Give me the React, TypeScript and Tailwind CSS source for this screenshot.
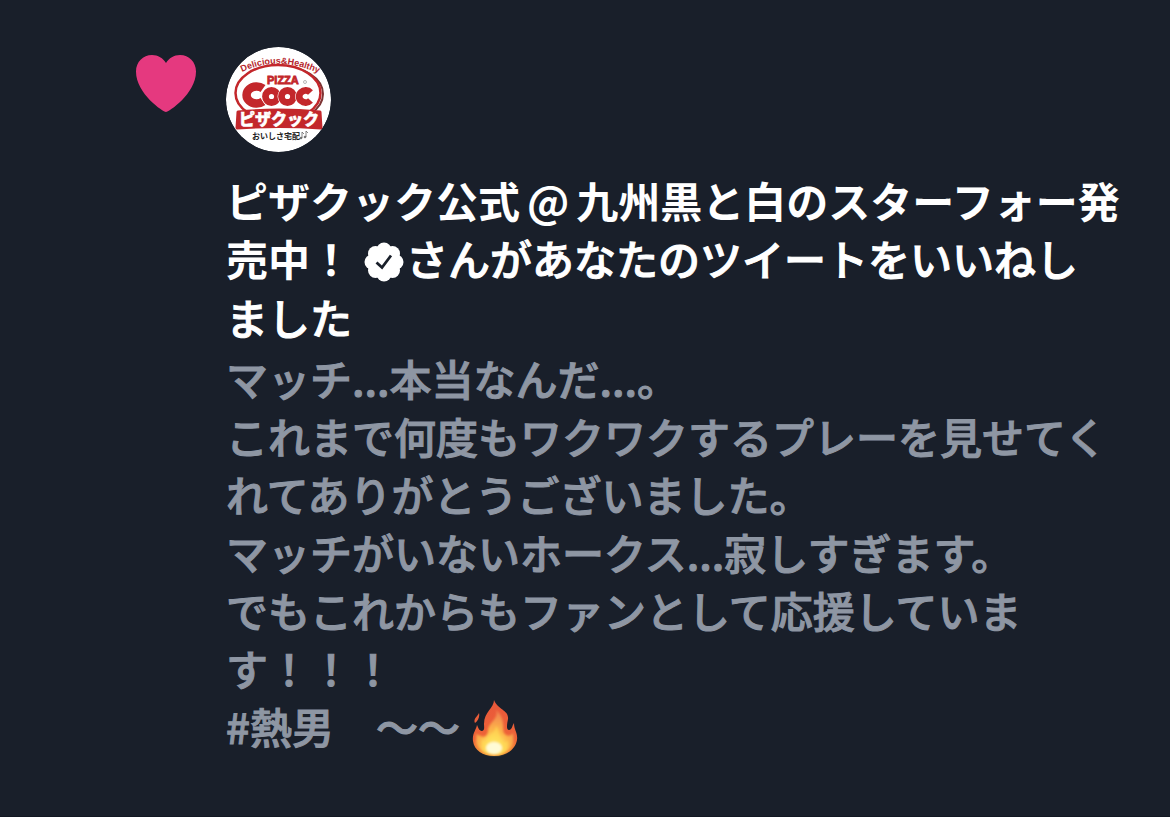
import React from "react";

function Heart() {
  return (
    <svg viewBox="0 0 60 58" className="mt-2 h-[58px] w-[60px] shrink-0" role="img" aria-label="いいね">
      <path
        fill="#e5397f"
        d="M30 57C27.500 57 0 39 0 16.500C0 7 7 0 16 0C22 0 27 3 30 8C33 3 38 0 44 0C53 0 60 7 60 16.500C60 39 32.500 57 30 57Z"
      />
    </svg>
  );
}

function Avatar() {
  return (
    <svg viewBox="0 0 105 105" className="size-[105px] rounded-full" role="img" aria-label="ピザクック">
      <defs>
        <path id="arc" d="M16 25Q53 7 96 28" />
      </defs>
      <circle cx="52.500" cy="52.500" r="52.500" fill="#fff" />
      <ellipse cx="54" cy="47" rx="43" ry="28" fill="none" stroke="#7d3434" strokeWidth="2" />
      <ellipse cx="52" cy="46" rx="42.500" ry="28" fill="#fff" stroke="#c3272b" strokeWidth="2.500" />
      <text fill="#b5262b" fontFamily="Liberation Sans, sans-serif" fontWeight="700" fontSize="9">
        <textPath href="#arc">Delicious&amp;Healthy</textPath>
      </text>
      <text x="41" y="37" fill="#c3272b" stroke="#c3272b" strokeWidth="0.800" fontFamily="Liberation Sans, sans-serif" fontWeight="700" fontSize="11">
        PIZZA
      </text>
      <circle cx="79" cy="35" r="1.500" fill="none" stroke="#999" strokeWidth="0.700" />
      <g fill="none" stroke="#c3272b" strokeWidth="6.800">
        <path d="M37 41.500A10 8.500 0 1 0 37 54.500" strokeWidth="8.500" />
        <circle cx="45.500" cy="49.500" r="6" stroke="#fff" strokeWidth="8.500" />
        <circle cx="45.500" cy="49.500" r="6" />
        <circle cx="61.500" cy="49.500" r="6" stroke="#fff" strokeWidth="8" />
        <circle cx="61.500" cy="49.500" r="6" />
        <path d="M84.500 45.500A6.500 6 0 1 0 84.500 53.500" stroke="#fff" strokeWidth="8" />
        <path d="M84.500 45.500A6.500 6 0 1 0 84.500 53.500" />
      </g>
      <path d="M12 65Q53 61 94 65L95 81Q53 78 11 81Z" fill="#c3272b" stroke="#c3272b" strokeWidth="3" strokeLinejoin="round" />
      <text x="53" y="78" textAnchor="middle" fill="#fff" stroke="#fff" strokeWidth="0.500" fontFamily="Noto Sans CJK JP, sans-serif" fontWeight="900" fontSize="16">
        ピザクック
      </text>
      <text x="26" y="92" fill="#222" fontFamily="Noto Sans CJK JP, sans-serif" fontWeight="700" fontSize="8">
        おいしさ宅配
      </text>
      <g stroke="#666" strokeWidth="0.800" fill="#666">
        <path d="M76 85V91M76 85L78 87M80 84V90M80 84L82 86" fill="none" />
        <circle cx="75" cy="91" r="0.900" />
        <circle cx="79" cy="90" r="0.900" />
      </g>
    </svg>
  );
}

function VerifiedBadge() {
  return (
    <svg viewBox="0 0 40 40" className="mb-1.5 ml-3 mr-0.5 inline-block size-10" role="img" aria-label="認証済み">
      <g fill="#fff">
        <circle cx="20" cy="20" r="16" />
        <circle cx="20" cy="8" r="7.500" />
        <circle cx="28.500" cy="11.500" r="7.500" />
        <circle cx="32" cy="20" r="7.500" />
        <circle cx="28.500" cy="28.500" r="7.500" />
        <circle cx="20" cy="32" r="7.500" />
        <circle cx="11.500" cy="28.500" r="7.500" />
        <circle cx="8" cy="20" r="7.500" />
        <circle cx="11.500" cy="11.500" r="7.500" />
      </g>
      <path d="M12.500 20.500L18 25.500L27 13.500" fill="none" stroke="#191f2a" strokeWidth="2.800" />
    </svg>
  );
}

function Fire() {
  return (
    <svg viewBox="0 0 46 58" className="mb-2 ml-3 inline-block h-[58px] w-[46px]" role="img" aria-label="炎">
      <defs>
        <linearGradient id="outer" x1="0" y1="0" x2="0" y2="1">
          <stop offset="0" stopColor="#e8573a" />
          <stop offset="0.700" stopColor="#ee6438" />
          <stop offset="1" stopColor="#f79a38" />
        </linearGradient>
        <radialGradient id="inner" cx="0.480" cy="0.850" r="0.800">
          <stop offset="0" stopColor="#fffbd0" />
          <stop offset="0.250" stopColor="#ffe463" />
          <stop offset="0.500" stopColor="#fdb54a" />
          <stop offset="1" stopColor="#f08350" />
        </radialGradient>
        <filter id="soft" x="-20%" y="-20%" width="140%" height="140%">
          <feGaussianBlur stdDeviation="1.200" />
        </filter>
      </defs>
      <path
        fill="url(#outer)"
        d="M22 1C22 9 12 13 12 25C12 28 13 31 10 32C7 32 6 28 5 26C4 31 0 35 1 42C2 51 11 57 22 57C34 57 43 51 45 41C46 34 42 31 42 24C40 27 40 31 37 31C34 31 35 25 36 20C37 11 26 11 22 1ZM7 14C8 18 6 22 3 24C1 20 5 18 7 14Z"
      />
      <g filter="url(#soft)">
        <path
          fill="url(#inner)"
          d="M24 11C27 20 17 23 16 31C16 36 13 39 9 37C6 36 5 35 4 35C5 39 3 42 5 46C8 52 14 56 23 56C32 56 40 50 41 44C42 40 41 37 41 34C39 37 35 38 32 34C30 30 34 19 24 11Z"
        />
        <path fill="#ffdc55" fillOpacity="0.600" d="M24 27C23 34 16 36 14 43C12 43 11 41 10 40C8 49 13 56 23 56C33 56 38 50 36 41C34 44 31 44 29 41C27 37 28 31 24 27Z" />
        <ellipse cx="22" cy="49" rx="8" ry="6" fill="#fffbd5" />
      </g>
    </svg>
  );
}

const tweetLines = [
  "マッチ...本当なんだ...。",
  "これまで何度もワクワクするプレーを見せてく",
  "れてありがとうございました。",
  "マッチがいないホークス...寂しすぎます。",
  "でもこれからもファンとして応援していま",
  "す！！！",
];

export default function App() {
  return (
    <main
      lang="ja"
      className="min-h-screen border-b border-[#121722] bg-[#191f2a] font-['Noto_Sans_CJK_JP',sans-serif] text-[42px] leading-[58px]"
    >
      <article className="flex gap-[30px] pl-[136px] pt-[47px]">
        <Heart />
        <div className="min-w-0 flex-1">
          <Avatar />
          <h1 className="mt-[19px] whitespace-nowrap font-medium text-white [-webkit-text-stroke:1px_#fff]">
            <span className="font-bold [-webkit-text-stroke:0]">
              ピザクック公式<span className="mx-[7px]">@</span>九州黒と白のスターフォー発
              <br />
              売中！
            </span>
            <VerifiedBadge />
            さんがあなたのツイートをいいねし
            <br />
            ました
          </h1>
          <p className="mt-[3px] whitespace-nowrap font-medium text-[#8e96a3] [-webkit-text-stroke:1px_#8e96a3]">
            {tweetLines.map((line) => (
              <React.Fragment key={line}>
                {line}
                <br />
              </React.Fragment>
            ))}
            #熱男　〜〜
            <Fire />
          </p>
        </div>
      </article>
    </main>
  );
}
